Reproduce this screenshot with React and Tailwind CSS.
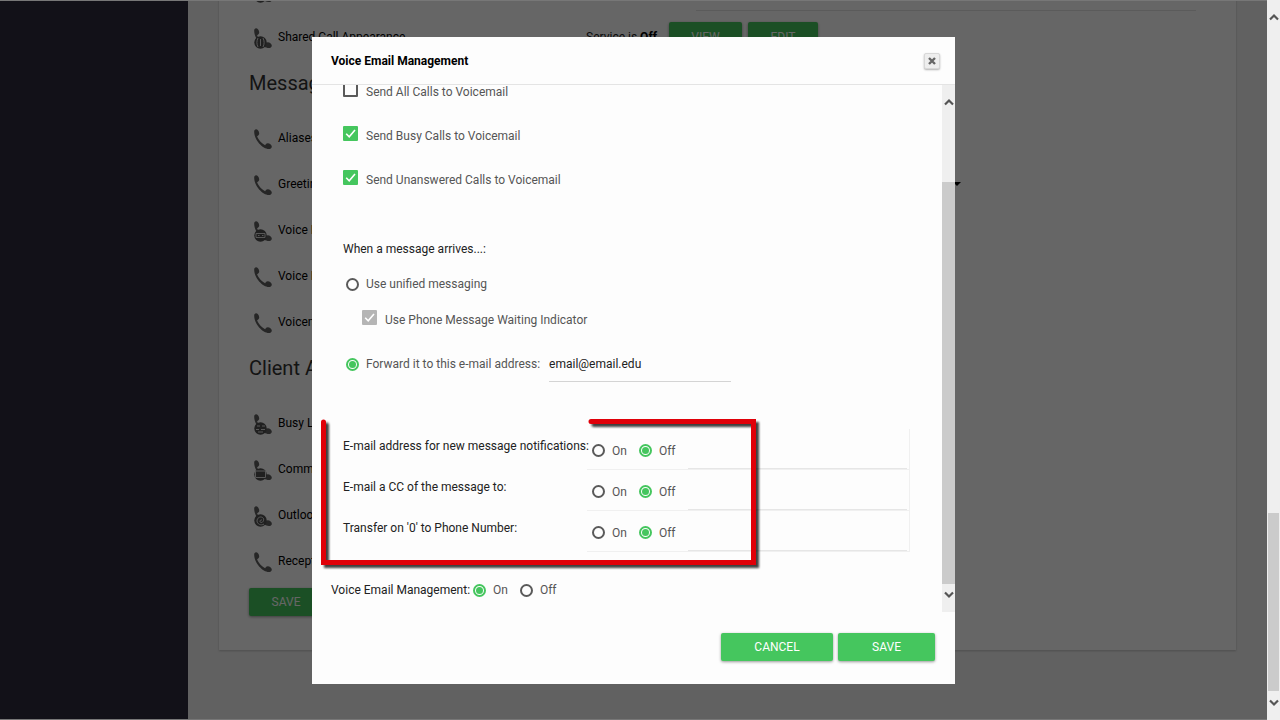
import { useState } from "react";

const Handset = ({ children }) => (
  <svg className="w-[22px] h-6 shrink-0" viewBox="0 0 22 24" fill="none">
    <path
      d="M1.200 3.500C1.200 1 3.600.400 5 2.200c1.500 1.900 1.800 4.300.2 5.400-.5.400-.9.500-1.100.9 1.500 3.500 4.400 6.800 8 8.800.4-.3.400-.8.800-1.200 1.200-1.300 3.300-.9 4.800.5 1.700 1.500 1.500 3.700-.6 4.300C11 22.300 1 12.500 1.200 3.500z"
      fill="#606060"
    />
    {children && (
      <g>
        <circle cx="7.500" cy="15.500" r="6.200" fill="#505050" />
        <g stroke="#ddd" strokeWidth="1">
          {children}
        </g>
      </g>
    )}
  </svg>
);

const glyphs = {
  shared: <path d="M5 11c-1.500 3-1.500 6 0 9M10 11c1.500 3 1.500 6 0 9M7.500 12v7" />,
  voice: <path d="M3 13.500h9v4H3zM5 15.500h1.500M9 15.500h1.500" />,
  lamp: <path d="M4 13h3M9 13h3M3 16.500h3M8 16.500h4M5 19h5" />,
  screen: <path d="M2.500 12h10v6.500h-10z" />,
  at: <path d="M11 19c-3 2-7 0-7-3s3-5 5.500-3.500S10 18 8 17.500s-1-3 1-2.500" />,
};

const messaging = [
  { name: "Aliases" },
  { name: "Greeting", caret: true },
  { name: "Voice Email", icon: "voice" },
  { name: "Voice Portal" },
  { name: "Voicemail" },
];

const clients = [
  { name: "Busy Lamp", icon: "lamp" },
  { name: "Comm", icon: "screen" },
  { name: "Outlook", icon: "at" },
  { name: "Reception" },
];

const Button = ({ children, className = "", ...props }) => (
  <button
    type="button"
    className={
      "rounded-xs bg-[#45c65e] text-xs text-white shadow-[0_1px_3px_rgba(0,0,0,0.4)] " +
      className
    }
    {...props}
  >
    {children}
  </button>
);

const ServiceRow = ({ name, icon, caret, children }) => (
  <div className="flex items-center h-[46px]">
    <div className="flex items-center gap-[3px] w-[337px] pl-1 text-xs text-black">
      <span className="pt-1">
        <Handset>{icon && glyphs[icon]}</Handset>
      </span>
      <span>{name}</span>
    </div>
    {children}
    {caret && (
      <span className="ml-[367px] border-x-4 border-t-4 border-x-transparent border-t-black" />
    )}
  </div>
);

const SectionTitle = ({ children }) => (
  <h2 className="flex items-center h-[46px] mb-[9px] text-xl text-[#333]">
    {children}
  </h2>
);

const Checkbox = ({ label, className = "", ...props }) => (
  <label className={"flex items-center gap-2 " + className}>
    <span className="relative mb-[6px] size-[15px] shrink-0">
      <input
        type="checkbox"
        className="peer block appearance-none size-[15px] border-2 border-[#5a5a5a] rounded-[1px] checked:border-0 checked:bg-[#45c65e] disabled:checked:bg-[#b5b5b5]"
        {...props}
      />
      <svg
        className="absolute inset-0 hidden size-[15px] pointer-events-none peer-checked:block"
        viewBox="0 0 15 15"
        fill="none"
        stroke="#fff"
        strokeWidth="1.600"
      >
        <path d="M3.200 7.800l3 3 5.800-6.800" />
      </svg>
    </span>
    {label}
  </label>
);

const Radio = ({ label, ...props }) => (
  <label className="flex items-center gap-[7px]">
    <input
      type="radio"
      className="appearance-none grid place-items-center size-[13px] border-2 border-[#5a5a5a] rounded-full checked:border-[#45c65e] checked:before:size-[7px] checked:before:rounded-full checked:before:bg-[#45c65e]"
      {...props}
    />
    {label}
  </label>
);

const OnOff = ({ name, value, onChange }) => (
  <div className="flex items-center gap-3 text-[#555]">
    <Radio label="On" name={name} checked={value} onChange={() => onChange(true)} />
    <Radio label="Off" name={name} checked={!value} onChange={() => onChange(false)} />
  </div>
);

const Chevron = ({ down }) => (
  <svg
    className={"w-[10px] h-[8px] shrink-0" + (down ? " rotate-180" : "")}
    viewBox="0 0 10 8"
    fill="none"
    stroke="#555"
    strokeWidth="2.200"
  >
    <path d="M1 6.500l4-4 4 4" />
  </svg>
);

const options = [
  { key: "notify", label: "E-mail address for new message notifications:" },
  { key: "cc", label: "E-mail a CC of the message to:" },
  { key: "transfer", label: "Transfer on '0' to Phone Number:" },
];

function VoiceEmailDialog() {
  const [calls, setCalls] = useState({ all: false, busy: true, unanswered: true });
  const [delivery, setDelivery] = useState("forward");
  const [email, setEmail] = useState("email@email.edu");
  const [toggles, setToggles] = useState({
    notify: false,
    cc: false,
    transfer: false,
    service: true,
  });

  const toggleCall = (key) => setCalls({ ...calls, [key]: !calls[key] });
  const setToggle = (key, value) => setToggles({ ...toggles, [key]: value });

  return (
    <div
      role="dialog"
      aria-label="Voice Email Management"
      className="flex flex-col w-full max-w-[643px] h-[calc(100vh-73px)] bg-[#fdfdfd] text-xs text-[#222]"
    >
      <header className="flex items-center justify-between h-12 shrink-0 pl-[19px] pr-[15px] border-b border-[#e4e4e4]">
        <h1 className="font-bold text-black">Voice Email Management</h1>
        <button
          type="button"
          aria-label="Close"
          className="grid place-items-center size-4 rounded-xs border border-[#d8d8d8] bg-[#eee] shadow-[0_1px_2px_rgba(0,0,0,0.3)]"
        >
          <svg className="size-2" viewBox="0 0 8 8" stroke="#666" strokeWidth="2.400">
            <path d="M1 1l6 6M7 1L1 7" />
          </svg>
        </button>
      </header>

      <div className="flex flex-1 min-h-0">
        <div className="flex-1 overflow-hidden pl-[31px] pr-8">
          <div className="-mt-[15px] text-[#555]">
            <Checkbox
              className="h-11"
              label="Send All Calls to Voicemail"
              checked={calls.all}
              onChange={() => toggleCall("all")}
            />
            <Checkbox
              className="h-11"
              label="Send Busy Calls to Voicemail"
              checked={calls.busy}
              onChange={() => toggleCall("busy")}
            />
            <Checkbox
              className="h-11"
              label="Send Unanswered Calls to Voicemail"
              checked={calls.unanswered}
              onChange={() => toggleCall("unanswered")}
            />
          </div>

          <p className="mt-[37px] leading-5">When a message arrives...:</p>
          <div className="pt-[7px] pl-[3px] text-[#555]">
            <div className="flex items-center h-9">
              <Radio
                label="Use unified messaging"
                name="delivery"
                checked={delivery === "unified"}
                onChange={() => setDelivery("unified")}
              />
            </div>
            <Checkbox
              className="h-9 pl-4"
              label="Use Phone Message Waiting Indicator"
              defaultChecked
              disabled
            />
            <div className="flex items-center h-[52px] gap-[9px]">
              <Radio
                label="Forward it to this e-mail address:"
                name="delivery"
                checked={delivery === "forward"}
                onChange={() => setDelivery("forward")}
              />
              <input
                type="email"
                aria-label="E-mail address"
                value={email}
                onChange={(e) => setEmail(e.target.value)}
                className="w-[182px] h-9 border-b border-[#d4d4d4] text-[#222] outline-none"
              />
            </div>
          </div>

          <div className="relative mt-[39px]">
            {options.map(({ key, label }) => (
              <div key={key} className="flex h-[41px]">
                <span className="w-[244px] pt-[7px] leading-5 whitespace-nowrap">
                  {label}
                </span>
                <div className="flex flex-1 items-center pl-[5px] pr-[2px] border-r border-b border-[#f0f0f0]">
                  <div className="pt-[3px]">
                    <OnOff
                      name={key}
                      value={toggles[key]}
                      onChange={(value) => setToggle(key, value)}
                    />
                  </div>
                  <div className="flex-1 self-end ml-3 border-b border-[#e6e6e6]" />
                </div>
              </div>
            ))}
            <svg
              className="absolute -top-[14px] -left-[25px] w-[444px] h-[154px] pointer-events-none drop-shadow-[3px_3px_1px_rgba(0,0,0,0.75)]"
              viewBox="0 0 444 154"
              fill="none"
              stroke="#e00009"
              strokeWidth="5"
              strokeLinecap="round"
            >
              <path d="M5.500 7V147.500H435.500V6.500H273" />
            </svg>
          </div>

          <div className="flex items-center gap-[3px] h-5 mt-7 -ml-3">
            <span>Voice Email Management:</span>
            <OnOff
              name="service"
              value={toggles.service}
              onChange={(value) => setToggle("service", value)}
            />
          </div>
        </div>

        <div className="flex flex-col items-center w-[13px] shrink-0 bg-[#efefef]">
          <div className="flex justify-center h-[97px] pt-[13px]">
            <Chevron />
          </div>
          <div className="flex-1 w-full bg-[#cbcbcb]" />
          <div className="flex justify-center h-7 pt-[7px]">
            <Chevron down />
          </div>
        </div>
      </div>

      <footer className="flex items-start justify-end gap-[5px] h-[72px] shrink-0 pt-[21px] pr-5">
        <Button className="h-7 w-28">CANCEL</Button>
        <Button className="h-7 w-[97px]">SAVE</Button>
      </footer>
    </div>
  );
}

export default function App() {
  return (
    <div className="flex h-screen overflow-hidden font-['Roboto',sans-serif]">
      <div className="relative flex flex-1 min-w-0 border-y border-[#777]">
        <aside className="w-[188px] shrink-0 bg-[#2d2b3c]" />
        <main className="flex-1 min-w-0 overflow-hidden bg-[#f2f2f2] px-[31px]">
          <section className="-mt-[33px] pl-[30px] pb-[34px] bg-white shadow-[0_1px_2px_rgba(0,0,0,0.2)]">
            <ServiceRow name="" icon="shared">
              <div className="ml-[110px] w-[500px] h-10 border-b border-[#e4e4e4]" />
            </ServiceRow>
            <ServiceRow name="Shared Call Appearance" icon="shared">
              <span className="w-[83px] text-xs text-[#222]">
                Service is <b className="text-black">Off</b>
              </span>
              <Button className="w-[73px] h-[30px] mr-[6px]">VIEW</Button>
              <Button className="w-[70px] h-[30px]">EDIT</Button>
            </ServiceRow>
            <SectionTitle>Messaging</SectionTitle>
            {messaging.map((item) => (
              <ServiceRow key={item.name} {...item} />
            ))}
            <SectionTitle>Client Apps</SectionTitle>
            {clients.map((item) => (
              <ServiceRow key={item.name} {...item} />
            ))}
            <Button className="h-7 w-[74px] mt-1">SAVE</Button>
          </section>
        </main>

        <div className="absolute inset-0 flex items-center justify-center pt-px bg-black/60">
          <VoiceEmailDialog />
        </div>
      </div>

      <div className="flex flex-col items-center w-[13px] shrink-0 py-[13px] bg-[#efefef]">
        <Chevron />
        <div className="flex-1" />
        <div className="w-[11px] h-[178px] mb-2 bg-[#cbcbcb]" />
        <Chevron down />
      </div>
    </div>
  );
}
